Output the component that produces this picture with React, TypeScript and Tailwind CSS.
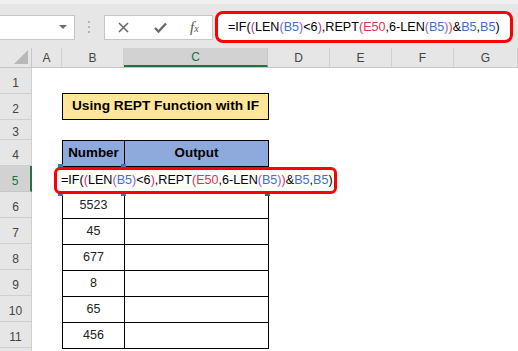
import React from 'react'

const formula: [string, string][] = [
  ['=IF(', 'text-black'],
  ['(', 'text-[#c8328c]'],
  ['LEN', 'text-black'],
  ['(', 'text-[#8f5bd6]'],
  ['B5', 'text-[#3c6fd0]'],
  [')', 'text-[#8f5bd6]'],
  ['<6', 'text-black'],
  [')', 'text-[#c8328c]'],
  [',REPT', 'text-black'],
  ['(', 'text-[#e0344e]'],
  ['E50', 'text-[#e0344e]'],
  [',6-LEN', 'text-black'],
  ['(', 'text-[#8f5bd6]'],
  ['B5', 'text-[#3c6fd0]'],
  [')', 'text-[#8f5bd6]'],
  [')', 'text-[#e0344e]'],
  ['&', 'text-black'],
  ['B5', 'text-[#3c6fd0]'],
  [',', 'text-black'],
  ['B5', 'text-[#3c6fd0]'],
  [')', 'text-black'],
]

const cols = [
  { l: 'A', w: 'w-[30px]' },
  { l: 'B', w: 'w-[62px]' },
  { l: 'C', w: 'w-[144px]' },
  { l: 'D', w: 'w-[62px]' },
  { l: 'E', w: 'w-[62px]' },
  { l: 'F', w: 'w-[62px]' },
  { l: 'G', w: 'w-[64px]' },
]

// row 12 only peeks in at the bottom, so it gets no label
const rows = [
  { n: '1', h: 'h-[26px]' },
  { n: '2', h: 'h-[26px]' },
  { n: '3', h: 'h-[20px]' },
  { n: '4', h: 'h-[26px]' },
  { n: '5', h: 'h-[26px]' },
  { n: '6', h: 'h-[26px]' },
  { n: '7', h: 'h-[26px]' },
  { n: '8', h: 'h-[26px]' },
  { n: '9', h: 'h-[26px]' },
  { n: '10', h: 'h-[26px]' },
  { n: '11', h: 'h-[26px]' },
  { n: '', h: 'h-[26px]' },
]

const values = ['5523', '45', '677', '8', '65', '456']

function Formula() {
  return (
    <span className="whitespace-nowrap text-[12.6px] leading-none">
      {formula.map(([t, c], i) => (
        <span key={i} className={c}>{t}</span>
      ))}
    </span>
  )
}

export default function App() {
  return (
    <div className="w-[518px] h-[351px] overflow-hidden bg-white font-['Liberation_Sans',Arial,sans-serif] text-black">
      {/* formula bar */}
      <div className="h-[48px] bg-[#e6e6e6] flex items-center pt-[2px] border-t-[4px] border-[#f0f0f0]">
        <div className="w-[75px] h-[25px] bg-white border border-l-0 border-[#c6c6c6] flex items-center justify-end pr-[7px]">
          <div className="w-0 h-0 border-l-[4px] border-r-[4px] border-t-[4px] border-l-transparent border-r-transparent border-t-[#6d6d6d]" />
        </div>
        <div className="ml-[13px] flex flex-col gap-[3px]">
          <div className="w-[2px] h-[2px] bg-[#b5b5b5]" />
          <div className="w-[2px] h-[2px] bg-[#b5b5b5]" />
          <div className="w-[2px] h-[2px] bg-[#b5b5b5]" />
        </div>
        <div className="ml-[14px] w-[109px] h-[25px] bg-white border border-[#c6c6c6] flex items-center">
          <svg className="ml-[13px]" width="11" height="11" viewBox="0 0 11 11">
            <path d="M1 1L10 10M10 1L1 10" stroke="#6a6a6a" strokeWidth="1.6" />
          </svg>
          <svg className="ml-[25px]" width="13" height="11" viewBox="0 0 13 11">
            <path d="M1 6L4.5 9.5L12 1.5" stroke="#6a6a6a" strokeWidth="2.4" fill="none" />
          </svg>
          <span className="ml-[23px] font-['Liberation_Serif',serif] italic text-[15px] text-[#555] leading-none">
            f<span className="text-[10px]">x</span>
          </span>
        </div>
        <div className="ml-[2px] w-[298px] h-[32px] border-[3.5px] border-[#ff0000] rounded-[8px] bg-white flex items-center pl-[10px]">
          <Formula />
        </div>
      </div>

      {/* column headers */}
      <div className="flex h-[20px] bg-[#e6e6e6] border-b border-[#c6c6c6]">
        <div className="w-[32px] h-full border-r border-[#c6c6c6] flex items-end justify-end pr-[3px] pb-[3px]">
          <svg width="14" height="14" viewBox="0 0 14 14">
            <polygon points="14,0 14,14 0,14" fill="#b8b8b8" />
          </svg>
        </div>
        {cols.map((c) =>
          c.l === 'C' ? (
            <div key={c.l} className={`${c.w} h-full bg-[#d2d2d2] border-r border-b-2 border-r-[#c6c6c6] border-b-[#217346] flex items-center justify-center text-[12px] text-[#217346]`}>
              {c.l}
            </div>
          ) : (
            <div key={c.l} className={`${c.w} h-full border-r border-[#d0d0d0] flex items-center justify-center text-[12px] text-[#444]`}>
              {c.l}
            </div>
          )
        )}
      </div>

      <div className="flex">
        {/* row headers */}
        <div className="w-[32px] flex flex-col bg-[#e6e6e6]">
          {rows.map((r, i) =>
            r.n === '5' ? (
              <div key={i} className={`${r.h} bg-[#d2d2d2] border-b border-r-2 border-b-[#c6c6c6] border-r-[#217346] flex items-center justify-center pt-[5px] text-[12px] text-[#217346]`}>
                {r.n}
              </div>
            ) : (
              <div key={i} className={`${r.h} border-b border-r border-[#cfcfcf] flex items-center justify-center pt-[5px] text-[12px] text-[#444]`}>
                {r.n}
              </div>
            )
          )}
        </div>

        {/* sheet */}
        <div className="flex-1 flex flex-col">
          <div className="h-[26px]" />
          <div className="h-[26px] pl-[30px]">
            <div className="w-[207px] h-[27px] -mt-[1px] bg-[#ffe699] border border-black flex items-center justify-center font-bold text-[13.7px]">
              Using REPT Function with IF
            </div>
          </div>
          <div className="h-[20px]" />

          <div className="ml-[30px] w-[207px] border-l border-t border-black">
            <div className="flex h-[26px]">
              <div className="w-[62px] bg-[#8ea9db] border-r border-b border-black flex items-center justify-center font-bold text-[13.4px]">Number</div>
              <div className="w-[144px] bg-[#8ea9db] border-r border-b border-black flex items-center justify-center font-bold text-[13.4px]">Output</div>
            </div>
            <div className="flex h-[26px] relative">
              <div className="w-[62px] border-r border-b border-black" />
              <div className="w-[144px] border-r border-b border-black" />
              <div className="absolute -left-[5px] -top-[3px] w-[5px] h-[5px] bg-[#4472c4]" />
              <div className="absolute left-[58px] -top-[3px] w-[5px] h-[5px] bg-[#4472c4]" />
              <div className="absolute -left-[5px] top-[24px] w-[5px] h-[5px] bg-[#4472c4]" />
              <div className="absolute left-[58px] top-[24px] w-[5px] h-[5px] bg-[#4472c4]" />
              <div className="absolute left-[202px] top-[24px] w-[5px] h-[5px] bg-[#217346]" />
              <div className="absolute -left-[9px] top-[0px] w-[283px] h-[27px] border-[3px] border-[#ff0000] rounded-[6px] bg-white flex items-center pl-[4px]">
                <Formula />
              </div>
            </div>
            {values.map((v) => (
              <div key={v} className="flex h-[26px]">
                <div className="w-[62px] border-r border-b border-black flex items-center justify-center text-[12.5px] text-[#222]">{v}</div>
                <div className="w-[144px] border-r border-b border-black" />
              </div>
            ))}
          </div>
        </div>
      </div>
    </div>
  )
}
